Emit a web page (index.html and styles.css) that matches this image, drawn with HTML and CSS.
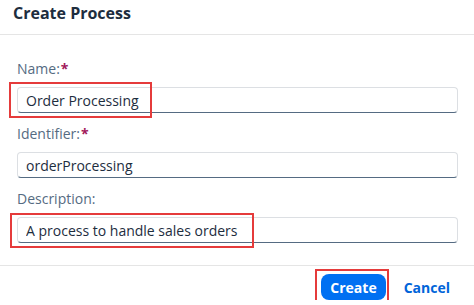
FILE: index.html
```html
<!DOCTYPE html>
<html lang="en">
<head>
    <meta charset="UTF-8">
    <meta name="viewport" content="width=device-width, initial-scale=1.0">
    <title>Create Process</title>
    <link rel="stylesheet" href="styles.css">
</head>
<body>
    <div id="dialog">
        <div id="dialog-header">
            <h1 class="title">Create Process</h1>
        </div>
        <div id="dialog-content">
            <div class="field">
                <div class="label">Name:<span class="required">*</span></div>
                <div class="input-wrap">
                    <input type="text" class="input" value="Order Processing">
                    <span class="mark mark-name"></span>
                </div>
            </div>
            <div class="field">
                <div class="label">Identifier:<span class="required">*</span></div>
                <div class="input-wrap">
                    <input type="text" class="input" value="orderProcessing">
                </div>
            </div>
            <div class="field">
                <div class="label">Description:</div>
                <div class="input-wrap">
                    <input type="text" class="input" value="A process to handle sales orders">
                    <span class="mark mark-desc"></span>
                </div>
            </div>
        </div>
        <div id="dialog-footer">
            <div class="btn-wrap">
                <button class="button button-emph">Create</button>
                <span class="mark mark-create"></span>
            </div>
            <button class="button button-ghost">Cancel</button>
        </div>
    </div>
</body>
</html>
```

FILE: styles.css
```css
body{
    margin:0; padding:0;
    background-color: #fff;
    font-family: "Open Sans", "Liberation Sans", sans-serif;
    color: #1d2d3e;
}
#dialog{
    width:100%;
}
#dialog-header{
    height:34px;
    border-bottom: 1px solid #e5e5e5;
    box-sizing: content-box;
    padding: 0 13px;
}
.title{
    margin:0;
    padding-top:3px;
    font-size:16px;
    line-height:20px;
    font-weight:700;
    color:#1d2d3e;
}
#dialog-content{
    padding: 25px 16px 10px 17px;
}
.field{
    margin-bottom:12px;
}
.label{
    font-size:14px;
    line-height:18px;
    color:#556b82;
    margin-bottom:9px;
}
.required{
    color:#a1195b;
    font-weight:700;
    margin-left:1px;
}
.input-wrap, .btn-wrap{
    position: relative;
}
.input{
    display:block;
    width:100%;
    height:26px;
    box-sizing:border-box;
    margin:0;
    padding:0 8px;
    font-family: "Open Sans", "Liberation Sans", sans-serif;
    font-size:14px;
    color:#1d2d3e;
    background-color:#fff;
    border:1px solid #dcdfe3;
    border-bottom:1px solid #556b82;
    border-radius:4px;
    outline:none;
}
.mark{
    position:absolute;
    border:2px solid #e53b3b;
    box-sizing:border-box;
    pointer-events:none;
}
.mark-name{
    left:-8px; top:-5px;
    width:143px; height:36px;
}
.mark-desc{
    left:-7px; top:-4px;
    width:244px; height:35px;
}
.mark-create{
    left:-6px; top:-5px;
    width:74px; height:35px;
}
#dialog-footer{
    border-top:1px solid #e5e5e5;
    display:flex;
    flex-direction:row;
    justify-content:flex-end;
    align-items:center;
    padding:8px 15px 0 0;
    gap:9px;
}
.button{
    height:26px;
    padding:0 9px;
    border:none;
    border-radius:8px;
    font-family: "Open Sans", "Liberation Sans", sans-serif;
    font-size:14px;
    font-weight:700;
    cursor:pointer;
}
.button-emph{
    display:block;
    background-color:#0070f2;
    color:#fff;
}
.button-ghost{
    background-color:transparent;
    color:#0064d9;
}
```
